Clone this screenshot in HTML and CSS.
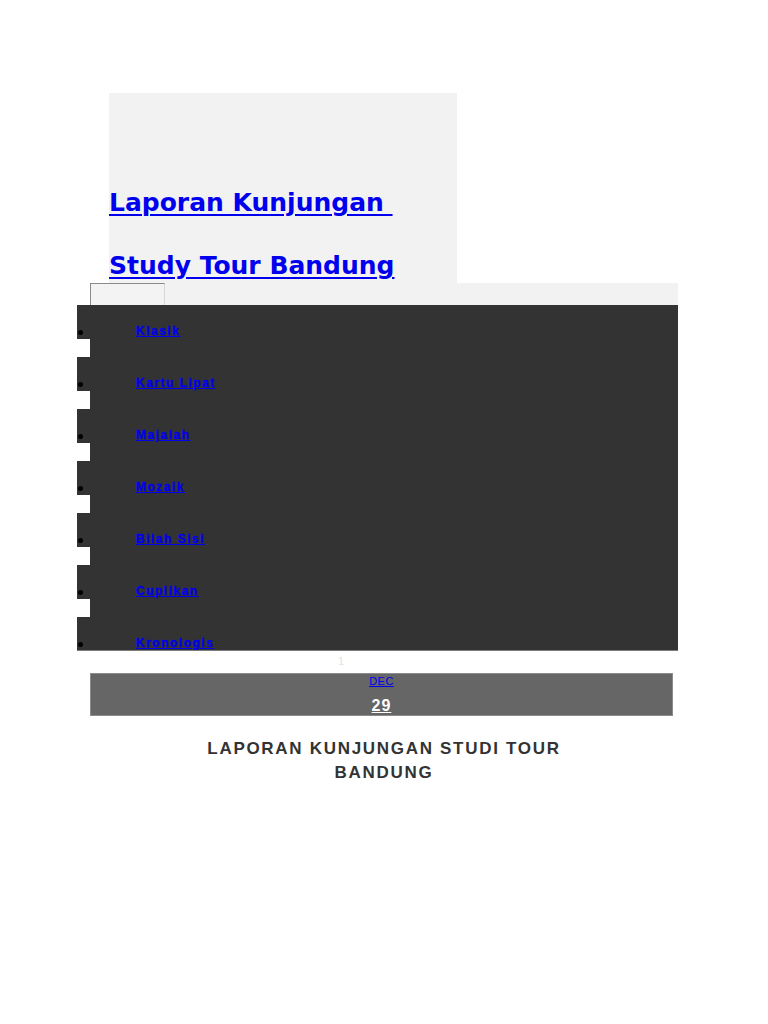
FILE: index.html
```html
<!DOCTYPE html>
<html lang="id">
<head>
<meta charset="utf-8">
<title>Laporan Kunjungan Study Tour Bandung</title>
<link rel="stylesheet" href="styles.css">
</head>
<body>
<header class="blog-header">
  <h1 class="blog-title">
    <a class="title-line" href="#">Laporan Kunjungan&nbsp;</a>
    <a class="title-line second" href="#">Study Tour Bandung</a>
  </h1>
</header>
<div class="search-strip">
  <div class="search-box"></div>
</div>
<nav class="views">
  <ul class="view-list">
    <li><a href="#">Klasik</a></li>
    <li><a href="#">Kartu Lipat</a></li>
    <li><a href="#">Majalah</a></li>
    <li><a href="#">Mozaik</a></li>
    <li><a href="#">Bilah Sisi</a></li>
    <li><a href="#">Cuplikan</a></li>
    <li><a href="#">Kronologis</a></li>
  </ul>
</nav>
<div class="pager"><span class="pager-num">1</span></div>
<div class="date-box">
  <a class="date-month" href="#">DEC</a>
  <a class="date-day" href="#">29</a>
</div>
<article class="post">
  <h2 class="post-title">LAPORAN KUNJUNGAN STUDI TOUR BANDUNG</h2>
</article>
</body>
</html>
```

FILE: styles.css
```css
html, body {
  margin: 0;
  padding: 0;
  background: #ffffff;
}

body {
  font-family: "Liberation Sans", Arial, sans-serif;
}

.blog-header {
  margin: 93px 0 0 109px;
  width: 348px;
  height: 190px;
  box-sizing: border-box;
  padding-top: 95px;
  background: #f2f2f2;
}

.blog-title {
  margin: 0;
  font-family: "DejaVu Sans", Verdana, sans-serif;
  font-weight: bold;
  font-size: 25px;
  line-height: 30px;
}

.title-line {
  display: block;
  width: max-content;
  color: #0000ee;
  text-decoration: underline;
  text-decoration-thickness: 2px;
  text-underline-offset: 3px;
}

.title-line.second {
  margin-top: 33px;
}

.search-strip {
  margin-left: 90px;
  width: 588px;
  height: 22px;
  background: #f2f2f2;
}

.search-box {
  width: 75px;
  height: 22px;
  box-sizing: border-box;
  border-top: 1px solid #8a8a8a;
  border-left: 1px solid #8a8a8a;
  border-right: 1px solid #d8d8d8;
  background: #f3f3f3;
}

.views {
  margin-left: 77px;
  width: 601px;
  height: 345px;
  overflow: hidden;
  border-bottom: 1px solid #7c7c7c;
}

.view-list {
  margin: 0 0 0 13px;
  padding: 0;
  list-style: none;
  background: #333333;
  height: 345px;
}

.view-list li {
  margin: 0 0 18px -13px;
  height: 34px;
  box-sizing: border-box;
  padding-top: 18px;
  background: #333333;
  display: flex;
  align-items: center;
  line-height: 14px;
}

.view-list li::before {
  content: "";
  width: 5px;
  height: 5px;
  margin: 2px 0 0 1px;
  border-radius: 50%;
  background: #000000;
  flex: none;
}

.view-list a {
  margin-left: 53px;
  color: #0000ee;
  font-weight: bold;
  font-size: 12px;
  letter-spacing: 1.5px;
  text-decoration: underline;
  -webkit-text-stroke: 0.3px #0000ee;
}

.pager {
  height: 22px;
  padding-left: 338px;
  box-sizing: border-box;
  font-size: 11px;
  line-height: 20px;
  color: #e2e2e2;
}

.date-box {
  margin-left: 90px;
  width: 583px;
  height: 43px;
  box-sizing: border-box;
  border: 1px solid #8c8c8c;
  background: #666666;
  display: flex;
  flex-direction: column;
  align-items: center;
}

.date-month {
  font-size: 11px;
  line-height: 14px;
  color: #0000ee;
  letter-spacing: 0.5px;
  text-decoration: underline;
}

.date-day {
  margin-top: 8px;
  font-size: 16px;
  line-height: 20px;
  font-weight: bold;
  color: #ffffff;
  letter-spacing: 1px;
  text-decoration: underline;
}

.post {
  margin: 21px 0 0 90px;
  width: 588px;
}

.post-title {
  margin: 0 auto;
  max-width: 400px;
  text-align: center;
  font-size: 17px;
  line-height: 24px;
  font-weight: bold;
  letter-spacing: 1.7px;
  color: #333333;
}
```
